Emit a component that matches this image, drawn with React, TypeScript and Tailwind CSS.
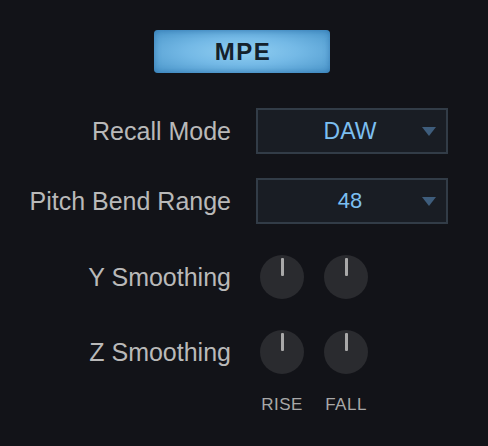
// App.tsx — MPE settings panel

const LABEL = "w-[231px] shrink-0 text-right text-[25px] leading-none text-[#b9b9b9]";

function Dropdown({ value, size }: { value: string; size: string }) {
  return (
    <div className="relative flex h-[46px] w-[192px] items-center justify-center border-2 border-[#323c47] bg-[#191d24]">
      <span className={`${size} leading-none text-[#7cbff0] -ml-1`}>{value}</span>
      {/* caret */}
      <div className="absolute right-[10px] top-[17px] h-0 w-0 border-x-[7.5px] border-t-[9px] border-x-transparent border-t-[#3e5d7c]" />
    </div>
  );
}

function Knob() {
  return (
    <div className="flex h-[44px] w-[44px] justify-center rounded-full bg-[#2a2b2f] pt-[3px]">
      <div className="h-[18px] w-[3px] rounded-[1px] bg-[#a9a9a9]" />
    </div>
  );
}

function Row({ label, children, className = "" }: { label: string; children: React.ReactNode; className?: string }) {
  return (
    <div className={`flex w-full items-center gap-[25px] ${className}`}>
      <span className={LABEL}>{label}</span>
      {children}
    </div>
  );
}

export default function App() {
  return (
    <div
      className="flex h-[446px] w-[488px] flex-col items-center bg-[#121318] pt-[30px]"
      style={{ fontFamily: '"Liberation Sans", Arial, sans-serif' }}
    >
      {/* MPE header button */}
      <div className="ml-[-4px] flex h-[43px] w-[176px] items-center justify-center rounded-[4px] bg-[radial-gradient(ellipse_at_center,#90cef1_0%,#74b9e6_45%,#4a95c9_100%)] shadow-[inset_0_0_6px_rgba(40,110,170,0.7)]">
        <span className="pl-[2px] text-[24px] font-bold leading-none tracking-[1.5px] text-[#14212c]">MPE</span>
      </div>

      <Row label="Recall Mode" className="mt-[35px]">
        <Dropdown value="DAW" size="text-[23px]" />
      </Row>

      <Row label="Pitch Bend Range" className="mt-[24px]">
        <Dropdown value="48" size="text-[22px]" />
      </Row>

      <Row label="Y Smoothing" className="mt-[31px]">
        <div className="flex gap-[20px] pl-[4px]">
          <Knob />
          <Knob />
        </div>
      </Row>

      <Row label="Z Smoothing" className="mt-[31px]">
        <div className="flex gap-[20px] pl-[4px]">
          <Knob />
          <Knob />
        </div>
      </Row>

      <div className="mt-[22px] flex w-full gap-[20px] pl-[260px]">
        <span className="w-[44px] text-center text-[17px] leading-none tracking-[0.5px] text-[#a8a8a8]">RISE</span>
        <span className="w-[44px] text-center text-[17px] leading-none tracking-[0.5px] text-[#a8a8a8]">FALL</span>
      </div>
    </div>
  );
}
